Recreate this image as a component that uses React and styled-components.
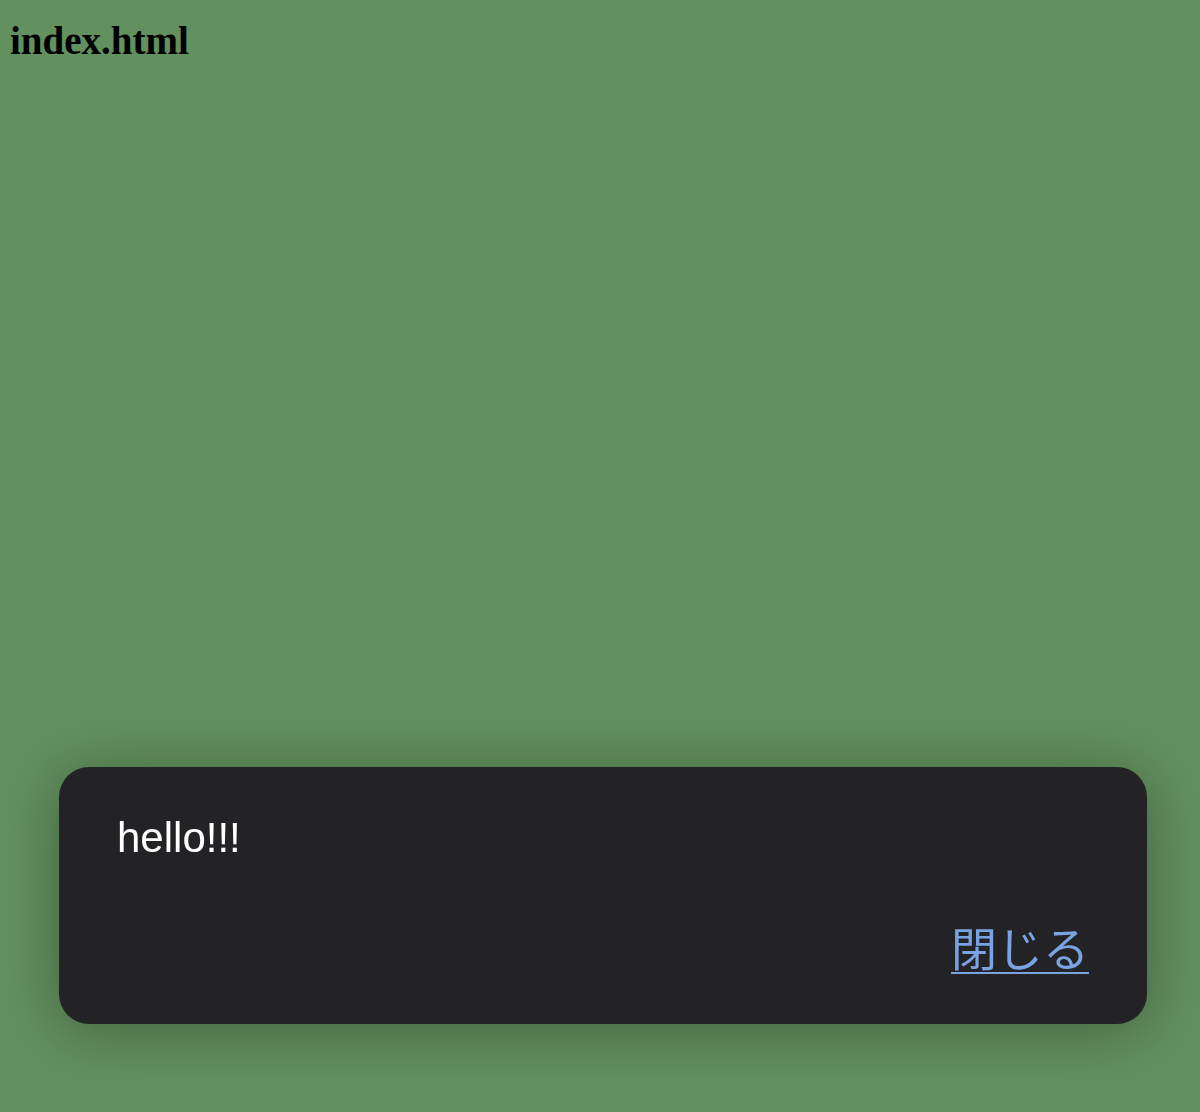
import React from 'react';
import styled, { createGlobalStyle } from 'styled-components';

const GlobalStyle = createGlobalStyle`
  html, body {
    margin: 0;
    padding: 0;
    height: 100%;
  }
  body {
    background: #62905e;
    font-family: "Liberation Serif", "Times New Roman", serif;
  }
`;

const Page = styled.div`
  min-height: 1112px;
  padding: 18px 10px 0;
  box-sizing: border-box;
`;

const Title = styled.h1`
  margin: 0;
  font-size: 39px;
  font-weight: 700;
  color: #000;
  line-height: 45px;
`;

const Dialog = styled.div`
  position: fixed;
  left: 59px;
  bottom: 88px;
  width: 1088px;
  height: 257px;
  box-sizing: border-box;
  padding: 47px 58px 50px 58px;
  display: flex;
  flex-direction: column;
  justify-content: space-between;
  background: #232325;
  border-radius: 30px;
  box-shadow: 0 6px 60px rgba(0, 0, 0, 0.32);
  font-family: "Liberation Sans", Arial, "Noto Sans CJK JP", sans-serif;
`;

const Message = styled.p`
  margin: 0;
  font-size: 42px;
  color: #fff;
`;

const Actions = styled.div`
  display: flex;
  justify-content: flex-end;
`;

const CloseLink = styled.a`
  font-family: "Noto Sans CJK JP", sans-serif;
  font-size: 46px;
  line-height: 1.2;
  color: #7aa3e3;
  text-decoration: underline;
  text-decoration-thickness: 2px;
  text-underline-offset: 6px;
  cursor: pointer;
`;

const App = () => (
  <Page>
    <GlobalStyle />
    <Title>index.html</Title>
    <Dialog>
      <Message>hello!!!</Message>
      <Actions>
        <CloseLink>閉じる</CloseLink>
      </Actions>
    </Dialog>
  </Page>
);

export default App;
